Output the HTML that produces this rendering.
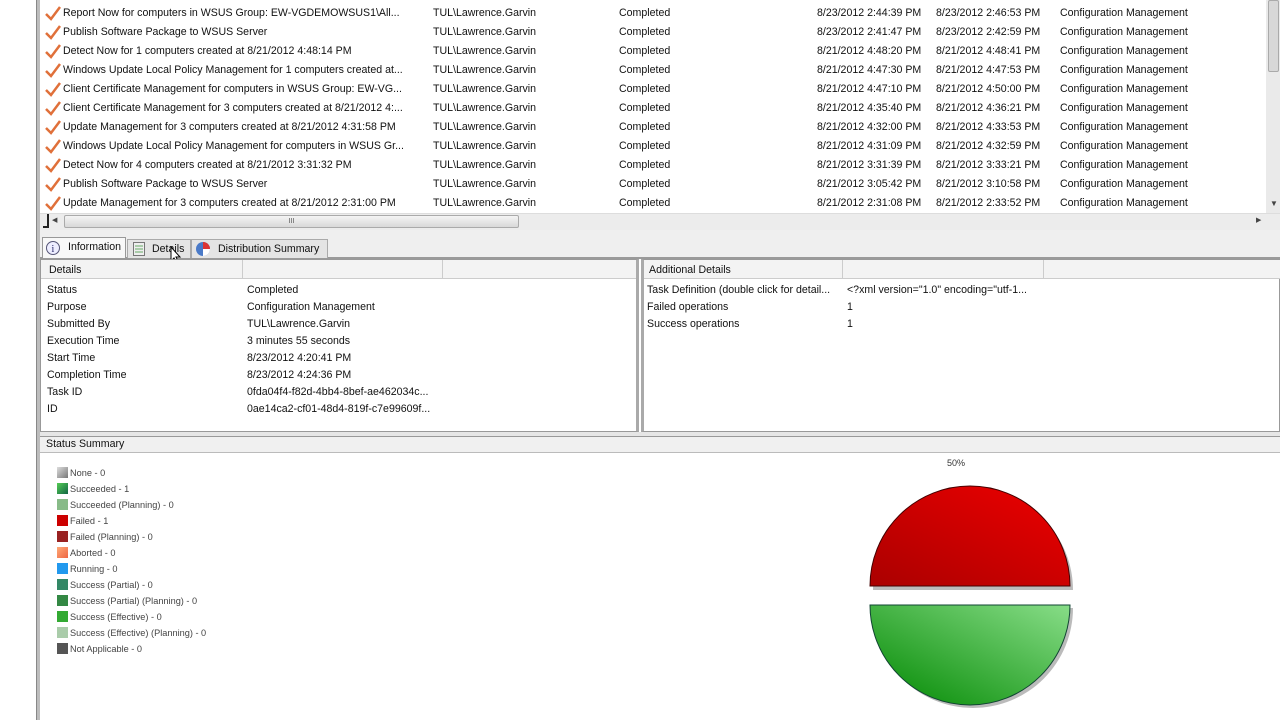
<!DOCTYPE html>
<html><head><style>
*{margin:0;padding:0;box-sizing:border-box}
body{width:1280px;height:720px;overflow:hidden;background:#fff;font-family:"Liberation Sans",sans-serif;font-size:10.6px;color:#111;position:relative}
.a{position:absolute;white-space:nowrap}
.row{position:absolute;left:0;height:19px;width:1266px}
.row span{position:absolute;top:4px;overflow:hidden}
.row span:nth-of-type(1){width:365px}
.chk{position:absolute;left:44px;top:2px}
.lg{position:absolute;left:57px;font-size:9.2px;color:#444}
.lg i{display:inline-block;width:11px;height:11px;vertical-align:-2px;margin-right:2px}
</style></head><body>
<div class="a" style="left:0;top:0;width:36px;height:720px;background:#fff"></div>
<div class="a" style="left:36px;top:0;width:4px;height:720px;background:#bdbdbd;border-left:1px solid #888"></div>
<div class="row" style="top:3px"><svg class="chk" width="18" height="16"><path d="M2 9 L7 14 L16 2" stroke="#e0703a" stroke-width="2.5" fill="none"/></svg><span style="left:63px">Report Now for computers in WSUS Group: EW-VGDEMOWSUS1\All...</span><span style="left:433px">TUL\Lawrence.Garvin</span><span style="left:619px">Completed</span><span style="left:817px">8/23/2012 2:44:39 PM</span><span style="left:936px">8/23/2012 2:46:53 PM</span><span style="left:1060px">Configuration Management</span></div>
<div class="row" style="top:22px"><svg class="chk" width="18" height="16"><path d="M2 9 L7 14 L16 2" stroke="#e0703a" stroke-width="2.5" fill="none"/></svg><span style="left:63px">Publish Software Package to WSUS Server</span><span style="left:433px">TUL\Lawrence.Garvin</span><span style="left:619px">Completed</span><span style="left:817px">8/23/2012 2:41:47 PM</span><span style="left:936px">8/23/2012 2:42:59 PM</span><span style="left:1060px">Configuration Management</span></div>
<div class="row" style="top:41px"><svg class="chk" width="18" height="16"><path d="M2 9 L7 14 L16 2" stroke="#e0703a" stroke-width="2.5" fill="none"/></svg><span style="left:63px">Detect Now for 1 computers created at 8/21/2012 4:48:14 PM</span><span style="left:433px">TUL\Lawrence.Garvin</span><span style="left:619px">Completed</span><span style="left:817px">8/21/2012 4:48:20 PM</span><span style="left:936px">8/21/2012 4:48:41 PM</span><span style="left:1060px">Configuration Management</span></div>
<div class="row" style="top:60px"><svg class="chk" width="18" height="16"><path d="M2 9 L7 14 L16 2" stroke="#e0703a" stroke-width="2.5" fill="none"/></svg><span style="left:63px">Windows Update Local Policy Management for 1 computers created at...</span><span style="left:433px">TUL\Lawrence.Garvin</span><span style="left:619px">Completed</span><span style="left:817px">8/21/2012 4:47:30 PM</span><span style="left:936px">8/21/2012 4:47:53 PM</span><span style="left:1060px">Configuration Management</span></div>
<div class="row" style="top:79px"><svg class="chk" width="18" height="16"><path d="M2 9 L7 14 L16 2" stroke="#e0703a" stroke-width="2.5" fill="none"/></svg><span style="left:63px">Client Certificate Management for computers in WSUS Group: EW-VG...</span><span style="left:433px">TUL\Lawrence.Garvin</span><span style="left:619px">Completed</span><span style="left:817px">8/21/2012 4:47:10 PM</span><span style="left:936px">8/21/2012 4:50:00 PM</span><span style="left:1060px">Configuration Management</span></div>
<div class="row" style="top:98px"><svg class="chk" width="18" height="16"><path d="M2 9 L7 14 L16 2" stroke="#e0703a" stroke-width="2.5" fill="none"/></svg><span style="left:63px">Client Certificate Management for 3 computers created at 8/21/2012 4:...</span><span style="left:433px">TUL\Lawrence.Garvin</span><span style="left:619px">Completed</span><span style="left:817px">8/21/2012 4:35:40 PM</span><span style="left:936px">8/21/2012 4:36:21 PM</span><span style="left:1060px">Configuration Management</span></div>
<div class="row" style="top:117px"><svg class="chk" width="18" height="16"><path d="M2 9 L7 14 L16 2" stroke="#e0703a" stroke-width="2.5" fill="none"/></svg><span style="left:63px">Update Management for 3 computers created at 8/21/2012 4:31:58 PM</span><span style="left:433px">TUL\Lawrence.Garvin</span><span style="left:619px">Completed</span><span style="left:817px">8/21/2012 4:32:00 PM</span><span style="left:936px">8/21/2012 4:33:53 PM</span><span style="left:1060px">Configuration Management</span></div>
<div class="row" style="top:136px"><svg class="chk" width="18" height="16"><path d="M2 9 L7 14 L16 2" stroke="#e0703a" stroke-width="2.5" fill="none"/></svg><span style="left:63px">Windows Update Local Policy Management for computers in WSUS Gr...</span><span style="left:433px">TUL\Lawrence.Garvin</span><span style="left:619px">Completed</span><span style="left:817px">8/21/2012 4:31:09 PM</span><span style="left:936px">8/21/2012 4:32:59 PM</span><span style="left:1060px">Configuration Management</span></div>
<div class="row" style="top:155px"><svg class="chk" width="18" height="16"><path d="M2 9 L7 14 L16 2" stroke="#e0703a" stroke-width="2.5" fill="none"/></svg><span style="left:63px">Detect Now for 4 computers created at 8/21/2012 3:31:32 PM</span><span style="left:433px">TUL\Lawrence.Garvin</span><span style="left:619px">Completed</span><span style="left:817px">8/21/2012 3:31:39 PM</span><span style="left:936px">8/21/2012 3:33:21 PM</span><span style="left:1060px">Configuration Management</span></div>
<div class="row" style="top:174px"><svg class="chk" width="18" height="16"><path d="M2 9 L7 14 L16 2" stroke="#e0703a" stroke-width="2.5" fill="none"/></svg><span style="left:63px">Publish Software Package to WSUS Server</span><span style="left:433px">TUL\Lawrence.Garvin</span><span style="left:619px">Completed</span><span style="left:817px">8/21/2012 3:05:42 PM</span><span style="left:936px">8/21/2012 3:10:58 PM</span><span style="left:1060px">Configuration Management</span></div>
<div class="row" style="top:193px"><svg class="chk" width="18" height="16"><path d="M2 9 L7 14 L16 2" stroke="#e0703a" stroke-width="2.5" fill="none"/></svg><span style="left:63px">Update Management for 3 computers created at 8/21/2012 2:31:00 PM</span><span style="left:433px">TUL\Lawrence.Garvin</span><span style="left:619px">Completed</span><span style="left:817px">8/21/2012 2:31:08 PM</span><span style="left:936px">8/21/2012 2:33:52 PM</span><span style="left:1060px">Configuration Management</span></div>
<div class="a" style="left:1266px;top:0;width:14px;height:213px;background:#eaeaea"></div>
<div class="a" style="left:1268px;top:0;width:11px;height:72px;background:#d8d8d8;border:1px solid #aaa;border-radius:2px"></div>
<div class="a" style="left:1270px;top:199px;font-size:8px;color:#444">▼</div>
<div class="a" style="left:40px;top:213px;width:1240px;height:17px;background:#ececec;border-top:1px solid #ddd"></div>
<div class="a" style="left:64px;top:215px;width:455px;height:13px;background:linear-gradient(#f4f4f4,#d8d8d8);border:1px solid #aaa;border-radius:2px;font-size:7px;text-align:center;line-height:11px;color:#555">III</div>
<div class="a" style="left:52px;top:216px;font-size:7px;color:#444">◀</div>
<div class="a" style="left:1256px;top:216px;font-size:7px;color:#444">▶</div>
<div class="a" style="left:43px;top:214px;width:6px;height:14px;border-right:2px solid #222;border-bottom:2px solid #222"></div>
<div class="a" style="left:40px;top:230px;width:1240px;height:29px;background:#efefef;border-bottom:2px solid #9a9a9a"></div>
<div class="a" style="left:42px;top:237px;width:84px;height:21px;background:#f8f8f8;border:1px solid #999;border-bottom:none"><svg class="a" style="left:2px;top:2px" width="16" height="16"><circle cx="8" cy="8" r="6.5" fill="#eef" stroke="#557"/><text x="6.5" y="12" font-size="10" fill="#226" font-family="Liberation Serif">i</text></svg><span class="a" style="left:25px;top:3px">Information</span></div>
<div class="a" style="left:127px;top:239px;width:64px;height:19px;background:#e4e4e4;border:1px solid #aaa;border-bottom:none"><svg class="a" style="left:5px;top:2px" width="12" height="14"><rect x="0.5" y="0.5" width="11" height="13" fill="#eee" stroke="#777"/><path d="M2 4h8M2 7h8M2 10h8" stroke="#6a6"/></svg><span class="a" style="left:24px;top:3px">Details</span></div>
<div class="a" style="left:191px;top:239px;width:137px;height:19px;background:#e4e4e4;border:1px solid #aaa;border-bottom:none"><svg class="a" style="left:3px;top:1px" width="16" height="16"><circle cx="8" cy="8" r="7" fill="#4a7ac8"/><path d="M8 8L8 1A7 7 0 0 1 15 8Z" fill="#d33"/><path d="M8 8L15 8A7 7 0 0 1 8 15Z" fill="#fff"/></svg><span class="a" style="left:26px;top:3px">Distribution Summary</span></div>
<svg class="a" style="left:170px;top:246px" width="12" height="20"><path d="M1 1 L1 15 L4 12 L7 18 L9 17 L6 11 L10 11 Z" fill="#fff" stroke="#000"/></svg>
<div class="a" style="left:40px;top:259px;width:599px;height:173px;border:1px solid #999;border-right:3px solid #aaa;background:#fff"></div>
<div class="a" style="left:41px;top:260px;width:595px;height:19px;background:#f3f3f3;border-bottom:1px solid #ccc"></div>
<div class="a" style="left:242px;top:260px;width:1px;height:19px;background:#ccc"></div>
<div class="a" style="left:442px;top:260px;width:1px;height:19px;background:#ccc"></div>
<div class="a" style="left:49px;top:264px">Details</div>
<div class="a" style="left:47px;top:282px;line-height:17px">Status<br>Purpose<br>Submitted By<br>Execution Time<br>Start Time<br>Completion Time<br>Task ID<br>ID</div>
<div class="a" style="left:247px;top:282px;line-height:17px">Completed<br>Configuration Management<br>TUL\Lawrence.Garvin<br>3 minutes 55 seconds<br>8/23/2012 4:20:41 PM<br>8/23/2012 4:24:36 PM<br>0fda04f4-f82d-4bb4-8bef-ae462034c...<br>0ae14ca2-cf01-48d4-819f-c7e99609f...</div>
<div class="a" style="left:641px;top:259px;width:639px;height:173px;border:1px solid #999;border-left:3px solid #aaa;background:#fff"></div>
<div class="a" style="left:644px;top:260px;width:636px;height:19px;background:#f3f3f3;border-bottom:1px solid #ccc"></div>
<div class="a" style="left:842px;top:260px;width:1px;height:19px;background:#ccc"></div>
<div class="a" style="left:1043px;top:260px;width:1px;height:19px;background:#ccc"></div>
<div class="a" style="left:649px;top:264px">Additional Details</div>
<div class="a" style="left:647px;top:282px;line-height:17px;width:195px;overflow:hidden">Task Definition (double click for detail...<br>Failed operations<br>Success operations</div>
<div class="a" style="left:847px;top:282px;line-height:17px">&lt;?xml version="1.0" encoding="utf-1...<br>1<br>1</div>
<div class="a" style="left:40px;top:432px;width:1240px;height:4px;background:#e6e6e6"></div>
<div class="a" style="left:40px;top:436px;width:1240px;height:17px;background:#f0f0f0;border-top:1px solid #999;border-bottom:1px solid #bbb"></div>
<div class="a" style="left:46px;top:438px">Status Summary</div>
<div class="lg" style="top:467px"><i style="background:linear-gradient(135deg,#ddd,#777)"></i>None - 0</div>
<div class="lg" style="top:483px"><i style="background:linear-gradient(135deg,#5c5,#164)"></i>Succeeded - 1</div>
<div class="lg" style="top:499px"><i style="background:#8b8"></i>Succeeded (Planning) - 0</div>
<div class="lg" style="top:515px"><i style="background:#c00"></i>Failed - 1</div>
<div class="lg" style="top:531px"><i style="background:#922"></i>Failed (Planning) - 0</div>
<div class="lg" style="top:547px"><i style="background:linear-gradient(135deg,#fa7,#e64)"></i>Aborted - 0</div>
<div class="lg" style="top:563px"><i style="background:#29e"></i>Running - 0</div>
<div class="lg" style="top:579px"><i style="background:#386"></i>Success (Partial) - 0</div>
<div class="lg" style="top:595px"><i style="background:#384"></i>Success (Partial) (Planning) - 0</div>
<div class="lg" style="top:611px"><i style="background:#3a3"></i>Success (Effective) - 0</div>
<div class="lg" style="top:627px"><i style="background:#aca"></i>Success (Effective) (Planning) - 0</div>
<div class="lg" style="top:643px"><i style="background:#555"></i>Not Applicable - 0</div>
<div class="a" style="left:947px;top:458px;font-size:9px;color:#333">50%</div>
<svg class="a" style="left:860px;top:480px" width="230" height="235">
<defs><linearGradient id="r" x1="0" y1="1" x2="1" y2="0"><stop offset="0" stop-color="#a00"/><stop offset="1" stop-color="#e00"/></linearGradient>
<linearGradient id="g" x1="0" y1="1" x2="1" y2="0"><stop offset="0" stop-color="#080"/><stop offset="1" stop-color="#8d8"/></linearGradient></defs>
<path d="M13 110 A100 100 0 0 1 213 110 Z" fill="#bbb"/>
<path d="M13 128 L213 128 A100 100 0 0 1 13 128 Z" fill="#bbb"/>
<path d="M10 106 A100 100 0 0 1 210 106 Z" fill="url(#r)" stroke="#400" stroke-width="1"/>
<path d="M10 125 L210 125 A100 100 0 0 1 10 125 Z" fill="url(#g)" stroke="#143" stroke-width="1"/>
</svg>
</body></html>
